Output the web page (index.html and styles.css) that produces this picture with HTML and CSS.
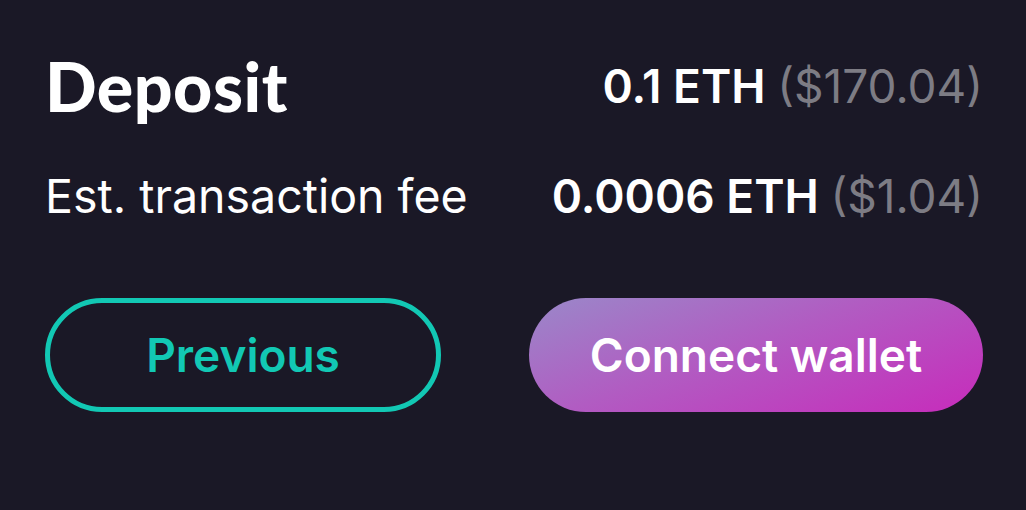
FILE: index.html
```html
<!DOCTYPE html>
<html lang="en">
<head>
    <meta charset="UTF-8">
    <title>Deposit</title>
    <link rel="stylesheet" href="styles.css">
</head>
<body>
    <div class="summary">
        <div class="row row-main">
            <h1 class="title">Deposit</h1>
            <div class="amount">0.1 ETH <span class="fiat">($170.04)</span></div>
        </div>
        <div class="row row-fee">
            <div class="label">Est. transaction fee</div>
            <div class="amount">0.0006 ETH <span class="fiat">($1.04)</span></div>
        </div>
        <div class="actions">
            <button class="btn btn-outline">Previous</button>
            <button class="btn btn-gradient">Connect wallet</button>
        </div>
    </div>
</body>
</html>
```

FILE: styles.css
```css
html, body {
    margin: 0;
    height: 100%;
}

body {
    font-family: Inter, "Noto Sans", sans-serif;
    background: #1a1826;
    color: #ffffff;
}

.summary {
    padding: 48px 43px 0 45px;
}

.row {
    display: flex;
    justify-content: space-between;
    align-items: center;
}

.title {
    margin: 0;
    font-family: Lato, sans-serif;
    font-weight: 900;
    font-size: 68px;
    line-height: 76px;
    letter-spacing: 0.5px;
}

.amount {
    font-size: 46px;
    line-height: 56px;
    font-weight: 600;
}

.fiat {
    font-weight: 400;
    color: #7d7c84;
}

.row-fee {
    margin-top: 44px;
}

.label {
    font-size: 46.5px;
    line-height: 56px;
    font-weight: 400;
}

.actions {
    display: flex;
    justify-content: space-between;
    margin-top: 74px;
}

.btn {
    height: 114px;
    border-radius: 57px;
    font-family: Inter, sans-serif;
    font-size: 46px;
    font-weight: 600;
    cursor: pointer;
}

.btn-outline {
    width: 396px;
    background: transparent;
    border: 5px solid #12c8b4;
    color: #12c8b4;
}

.btn-gradient {
    width: 454px;
    border: none;
    color: #ffffff;
    background: linear-gradient(160deg, #9a88c9 0%, #b15cc2 45%, #c72bbb 100%);
}
```
